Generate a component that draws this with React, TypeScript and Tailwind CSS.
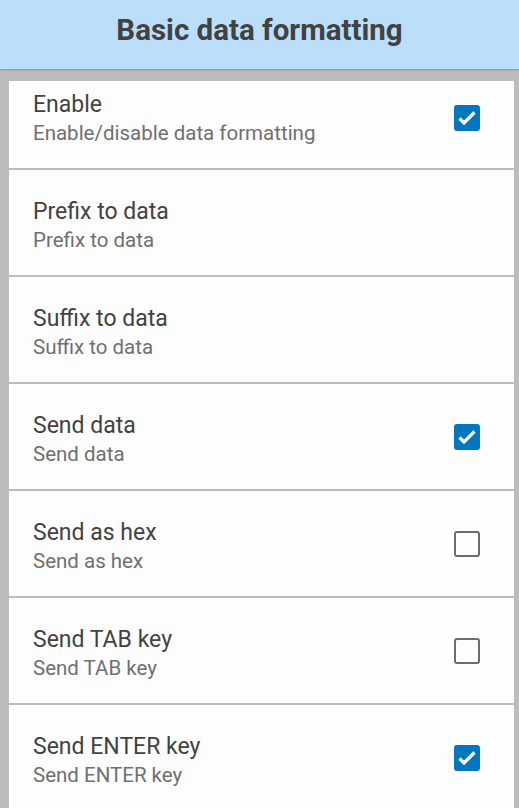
import React from "react";

const ROWS = [
  { title: "Prefix to data", sub: "Prefix to data" },
  { title: "Suffix to data", sub: "Suffix to data" },
  { title: "Send data", sub: "Send data", checked: true },
  { title: "Send as hex", sub: "Send as hex", checked: false },
  { title: "Send TAB key", sub: "Send TAB key", checked: false },
  { title: "Send ENTER key", sub: "Send ENTER key", checked: true },
];

function Check({ checked }: { checked: boolean }) {
  if (checked) {
    return (
      <div className="w-[26px] h-[26px] rounded-[3px] bg-[#0277bd]">
        <svg width="26" height="26" viewBox="0 0 26 26" fill="none">
          <path d="M5.5 13.5l4.5 4.5L20.5 7.5" stroke="white" strokeWidth="3.2" />
        </svg>
      </div>
    );
  }
  return <div className="w-[26px] h-[26px] rounded-[3px] border-[2.5px] border-[#6d6d6d]" />;
}

function Row({ title, sub, checked, first }: { title: string; sub: string; checked?: boolean; first?: boolean }) {
  return (
    <div className={`bg-[#fdfdfd] flex pl-6 pr-[34px] ${first ? "h-[87px]" : "h-[105px]"}`}>
      <div className={`flex-1 ${first ? "pt-[10px]" : "pt-[28px]"}`}>
        <div className="text-[23px] leading-[28px] text-[#424242]">{title}</div>
        <div className="text-[20.5px] leading-[28px] text-[#707070]">{sub}</div>
      </div>
      {checked !== undefined && (
        <div className={`self-center ${first ? "-mt-[14px]" : "mt-[1px]"}`}>
          <Check checked={checked} />
        </div>
      )}
    </div>
  );
}

export default function App() {
  return (
    <div className="w-[519px] h-[808px] overflow-hidden bg-[#bcbcbc] font-['Roboto',sans-serif]">
      <div className="h-[69px] bg-[#bbdefb] flex justify-center pt-[12px] shadow-[0_1px_2px_rgba(0,0,0,0.25)] relative z-10">
        <h1 className="text-[29.5px] leading-[36px] font-bold text-[#424242]">Basic data formatting</h1>
      </div>
      <div className="pt-[12px] pl-[9px] pr-[5px] flex flex-col gap-[2px]">
        <Row first title="Enable" sub="Enable/disable data formatting" checked={true} />
        {ROWS.map((r) => (
          <Row key={r.title} {...r} />
        ))}
      </div>
    </div>
  );
}
